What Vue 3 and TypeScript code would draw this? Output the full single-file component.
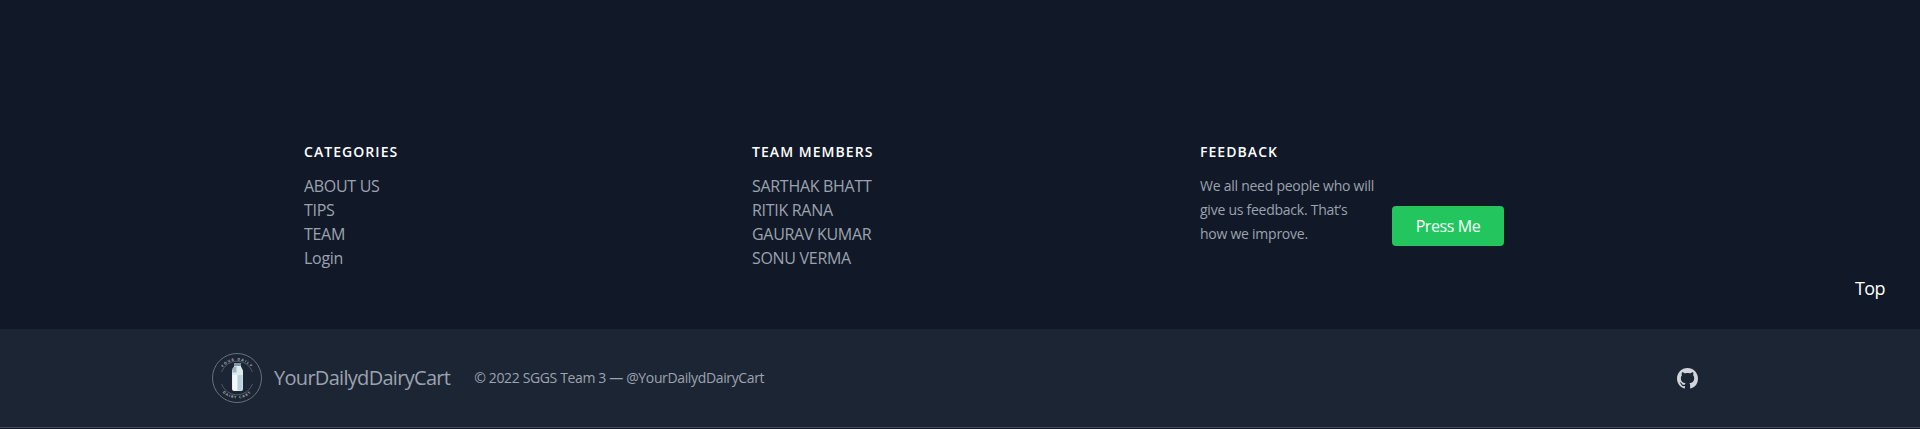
<script setup lang="ts">
const columns = [
  { title: 'CATEGORIES', links: ['ABOUT US', 'TIPS', 'TEAM', 'Login'] },
  { title: 'TEAM MEMBERS', links: ['SARTHAK BHATT', 'RITIK RANA', 'GAURAV KUMAR', 'SONU VERMA'] },
]
</script>

<template>
  <footer class="footer">
    <div class="top">
      <div class="columns">
        <div v-for="col in columns" :key="col.title" class="col">
          <h2 class="title">{{ col.title }}</h2>
          <ul class="links">
            <li v-for="l in col.links" :key="l">{{ l }}</li>
          </ul>
        </div>
        <div class="col">
          <h2 class="title">FEEDBACK</h2>
          <div class="feedback">
            <p class="fb-text">We all need people who will give us feedback. That’s how we improve.</p>
            <button class="btn">Press Me</button>
          </div>
        </div>
      </div>
      <a class="to-top">Top</a>
    </div>
    <div class="bar">
      <div class="bar-inner">
        <div class="brand">
          <svg class="logo" viewBox="0 0 50 50" width="50" height="50">
            <defs>
              <path id="arc-top" d="M7.500 25A17.500 17.500 0 0 1 42.500 25" />
              <path id="arc-bot" d="M4.500 25A20.500 20.500 0 0 0 45.500 25" />
            </defs>
            <circle cx="25" cy="25" r="24.500" fill="none" stroke="#9aa4ae" stroke-width="0.6" />
            <path d="M9.500 19A16.500 16.500 0 0 1 40.500 19M9.500 31A16.500 16.500 0 0 0 40.500 31" fill="none" stroke="#7f8a96" stroke-width="0.5" />
            <text class="logo-text" text-anchor="middle"><textPath href="#arc-top" startOffset="50%">YOUR DAILY</textPath></text>
            <text class="logo-text" text-anchor="middle"><textPath href="#arc-bot" startOffset="50%">DAIRY CART</textPath></text>
            <path d="M22 10h7v3.500l2 4V36q0 2-2 2h-7q-2 0-2-2V17.500l2-4z" fill="#dfe9ee" />
            <path d="M22 10h7v3h-7z" fill="#7f98a5" />
            <path d="M20.500 22h5v15.500h-3q-2 0-2-2z" fill="#f4f8fa" />
            <path d="M20.500 15.500l2-2h2v6h-4z" fill="#9fb4bf" />
            <path d="M25.500 22H30.500v14q0 1.500-1.500 1.500h-3.500z" fill="#b9d3de" />
          </svg>
          <span class="name">YourDailydDairyCart</span>
        </div>
        <p class="copy">© 2022 SGGS Team 3 — @YourDailydDairyCart</p>
        <a class="gh" aria-label="GitHub">
          <svg viewBox="0 0 16 16" width="21" height="21" fill="#d1d5db">
            <path d="M8 0C3.580 0 0 3.580 0 8c0 3.540 2.290 6.530 5.470 7.590.4.070.55-.17.55-.38 0-.19-.01-.82-.01-1.490-2.010.37-2.530-.49-2.690-.94-.09-.23-.48-.94-.82-1.130-.28-.15-.68-.52-.01-.53.63-.01 1.080.58 1.230.82.720 1.210 1.870.870 2.330.660.070-.520.280-.870.510-1.070-1.780-.2-3.640-.890-3.640-3.950 0-.870.310-1.590.820-2.150-.080-.2-.360-1.020.080-2.120 0 0 .670-.210 2.200.820.640-.180 1.320-.270 2-.270s1.360.090 2 .270c1.530-1.040 2.200-.820 2.200-.820.440 1.100.160 1.920.080 2.120.510.560.820 1.270.820 2.150 0 3.070-1.870 3.750-3.650 3.950.290.250.540.730.540 1.480 0 1.070-.010 1.930-.010 2.200 0 .210.150.460.550.380A8.010 8.010 0 0 0 16 8c0-4.420-3.580-8-8-8z" />
          </svg>
        </a>
      </div>
    </div>
  </footer>
</template>

<style>
html, body { background: #111827; }
</style>

<style scoped>
.footer {
  height: 429px;
  overflow: hidden;
  display: flex;
  flex-direction: column;
  background: #111827;
  font-family: "Open Sans", "Noto Sans", sans-serif;
  color: #9ca3af;
}
.top {
  flex: 1;
  position: relative;
  padding: 142px 0 0 304px;
}
.columns { display: flex; }
.col { width: 448px; }
.title {
  margin: 0 0 12px;
  font-size: 14px;
  line-height: 20px;
  font-weight: 600;
  letter-spacing: 1.05px;
  color: #fff;
}
.links {
  list-style: none;
  margin: 0;
  padding: 0;
  font-size: 16px;
  line-height: 24px;
  letter-spacing: -0.3px;
}
.feedback { display: flex; align-items: flex-end; }
.fb-text {
  width: 176px;
  margin: 0 16px 0 0;
  font-size: 14px;
  line-height: 24px;
  letter-spacing: -0.25px;
}
.btn {
  width: 112px;
  height: 40px;
  border: 0;
  border-radius: 4px;
  background: #22c55e;
  color: #fff;
  font: inherit;
  font-size: 16px;
  letter-spacing: -0.4px;
}
.to-top {
  position: absolute;
  right: 35px;
  top: 276px;
  color: #fff;
  font-size: 18px;
  line-height: 24px;
  letter-spacing: -0.6px;
}
.bar {
  height: 100px;
  box-sizing: border-box;
  background: #1c2533;
  border-bottom: 1px solid #111827;
}
.bar-inner {
  height: 100%;
  box-sizing: border-box;
  padding: 0 212px;
  display: flex;
  align-items: center;
  border-bottom: 1px solid #454c57;
}
.brand { display: flex; align-items: center; }
.logo { display: block; }
.logo-text {
  font-size: 3.600px;
  font-weight: 700;
  letter-spacing: 1.100px;
  fill: #aab2bb;
}
.name {
  margin-left: 12px;
  font-size: 20px;
  line-height: 28px;
  letter-spacing: -0.7px;
  color: #9ca3af;
}
.copy {
  margin: 0 0 0 24px;
  font-size: 14px;
  line-height: 20px;
  letter-spacing: -0.36px;
}
.gh { margin-left: auto; margin-right: 10px; display: block; height: 21px; }
</style>
